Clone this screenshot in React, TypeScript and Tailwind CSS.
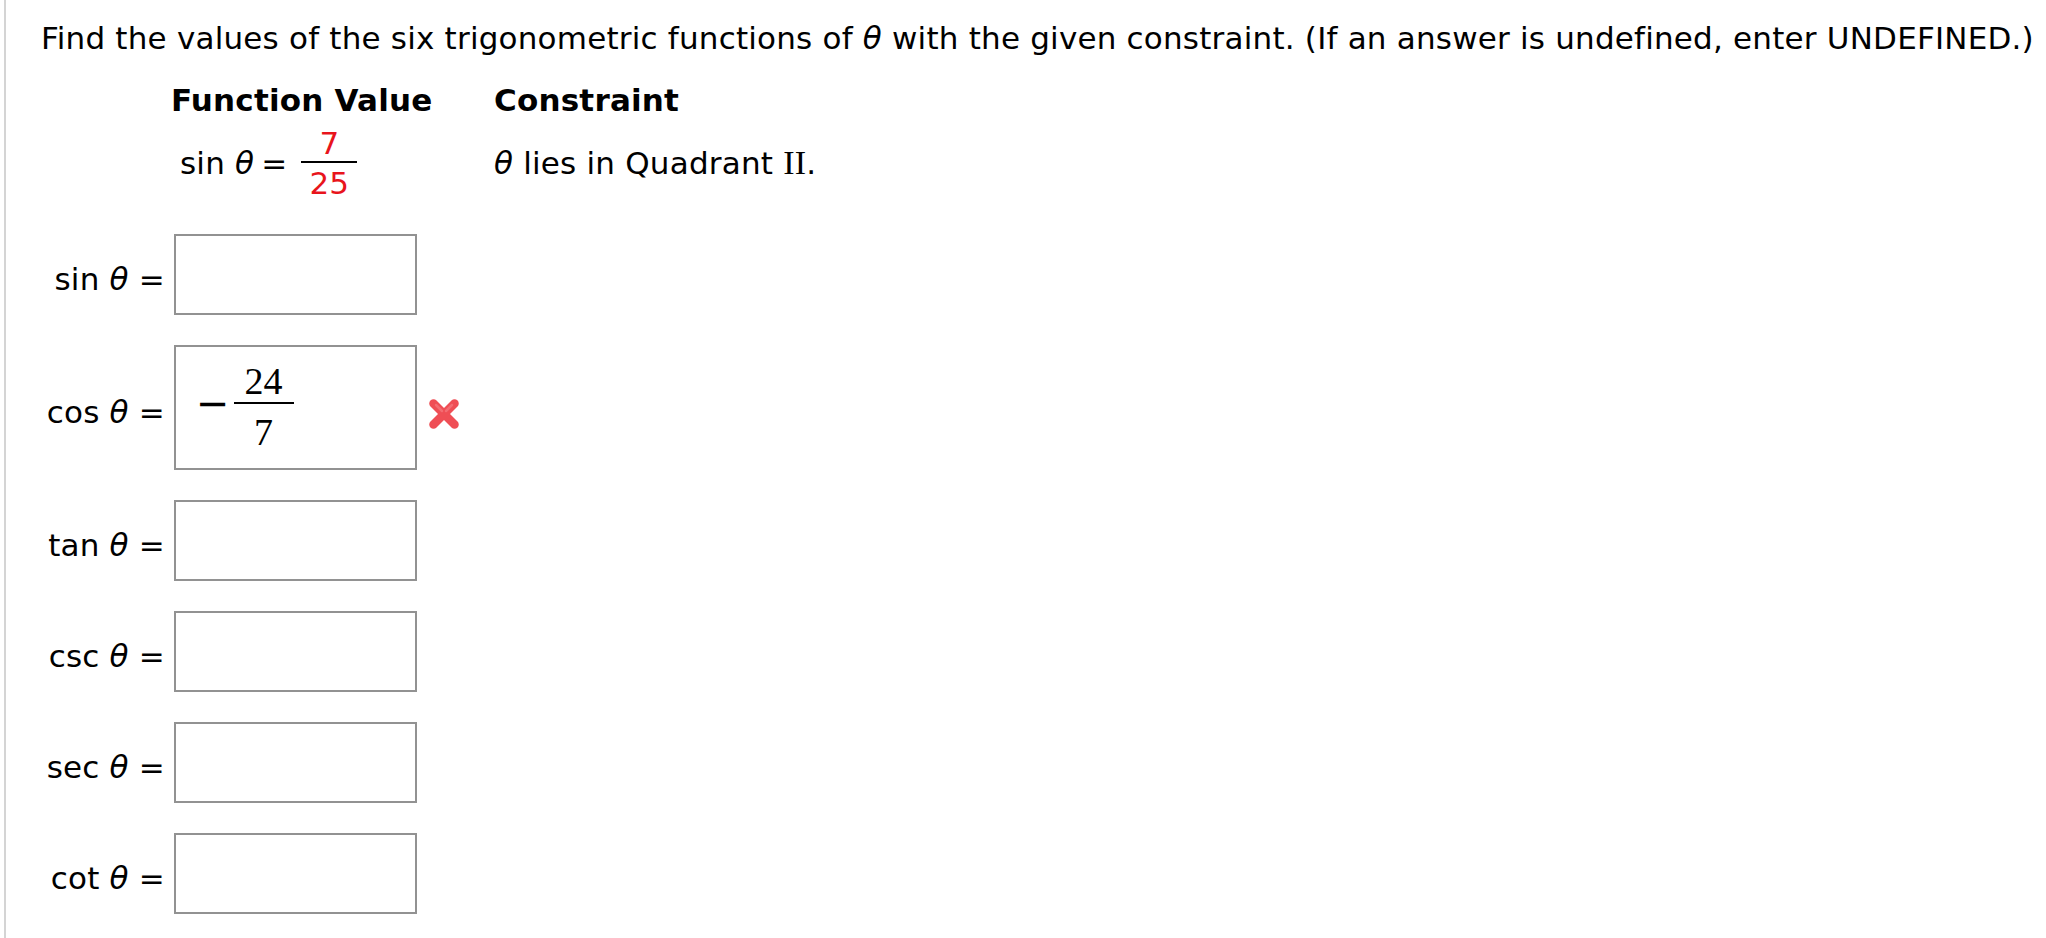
const rows = ['sin', 'cos', 'tan', 'csc', 'sec', 'cot'];

function Theta() {
  return <i className="italic">θ</i>;
}

function WrongMark() {
  return (
    <svg viewBox="0 0 32 32" className="ml-[11px] mt-[12px] h-[32px] w-[32px]">
      <g stroke="#ef4e55" strokeWidth="8.5" strokeLinecap="round">
        <line x1="5.5" y1="5.5" x2="26.5" y2="26.5" />
        <line x1="26.5" y1="5.5" x2="5.5" y2="26.5" />
      </g>
      <g stroke="#f7878b" strokeWidth="2.5" strokeLinecap="round" opacity="0.55">
        <line x1="8" y1="7" x2="14" y2="13" />
        <line x1="24" y1="7" x2="18" y2="13" />
      </g>
    </svg>
  );
}

function AnswerBox({ filled }: { filled?: boolean }) {
  if (!filled) {
    return <div className="ml-[9px] h-[81px] w-[243px] border-2 border-[#929292] bg-white" />;
  }

  return (
    <div className="ml-[9px] flex h-[125px] w-[243px] items-center border-2 border-[#929292] bg-white pl-[20px]">
      <span className="mb-[9px] text-[40px] leading-[40px] tracking-normal">−</span>
      <div className="mb-[2px] ml-[4px] flex flex-col items-center font-['Liberation_Serif',serif] text-[38px] tracking-normal">
        <span className="px-[11px] leading-[34px]">24</span>
        <span className="mt-[4px] h-[2px] w-full bg-black" />
        <span className="mt-[11px] leading-[34px]">7</span>
      </div>
    </div>
  );
}

export default function App() {
  return (
    <div className="min-h-[938px] bg-white pl-[4px] font-['DejaVu_Sans',sans-serif] text-[31px] tracking-[0.2px] text-black">
      <div className="min-h-[938px] border-l-2 border-[#d4d4d4] pl-[35px] pt-[20px]">
        <p className="whitespace-nowrap leading-[36px]">
          Find the values of the six trigonometric functions of <Theta /> with the given constraint. (If an
          answer is undefined, enter UNDEFINED.)
        </p>

        <div className="ml-[130px] mt-[26px]">
          <div className="flex font-bold leading-[36px]">
            <div className="w-[323px]">Function Value</div>
            <div>Constraint</div>
          </div>

          <div className="mt-[10px] flex items-center">
            <div className="flex w-[323px] items-center pl-[9px]">
              <span className="whitespace-nowrap leading-[33px]">
                sin <Theta />
                <span className="ml-[7px]">=</span>
              </span>
              <div className="ml-[14px] flex flex-col items-center text-[#e8141c]">
                <span className="leading-[30px]">7</span>
                <span className="mt-[3px] h-[2px] w-full bg-black" />
                <span className="mt-[5px] px-[8px] leading-[30px]">25</span>
              </div>
            </div>
            <div className="whitespace-nowrap leading-[33px]">
              <Theta /> lies in Quadrant{' '}
              <span className="font-['Liberation_Serif',serif] text-[34px]">II</span>.
            </div>
          </div>
        </div>

        <div className="mt-[36px] flex flex-col gap-[30px]">
          {rows.map((fn) => (
            <div key={fn} className="flex items-center">
              <div className="w-[124px] whitespace-nowrap pt-[10px] text-right leading-[33px]">
                {fn} <Theta /> =
              </div>
              <AnswerBox filled={fn === 'cos'} />
              {fn === 'cos' && <WrongMark />}
            </div>
          ))}
        </div>
      </div>
    </div>
  );
}
